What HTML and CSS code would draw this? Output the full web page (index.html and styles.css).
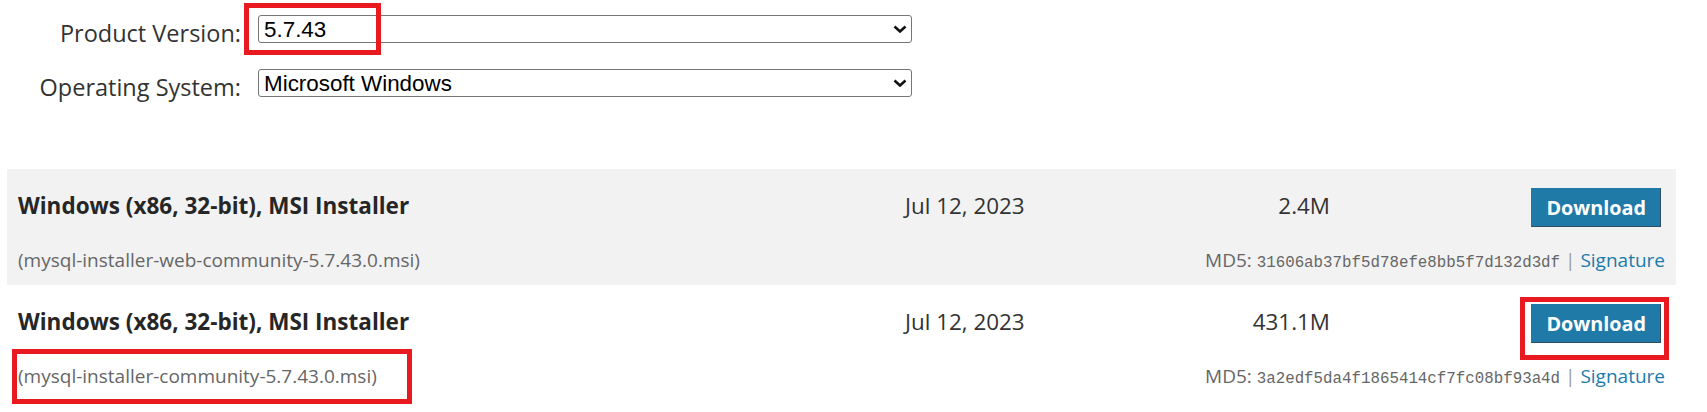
FILE: index.html
```html
<!DOCTYPE html>
<html lang="en">
<head>
    <meta charset="UTF-8">
    <meta name="viewport" content="width=device-width, initial-scale=1.0">
    <title>MySQL Installer Downloads</title>
    <link rel="stylesheet" href="styles.css">
</head>
<body>
    <div class="page">
        <div class="selectors">
            <label class="sel-label" for="version">Product Version:</label>
            <div class="sel-wrap">
                <select id="version" class="sel">
                    <option>5.7.43</option>
                </select>
                <svg class="chevron" viewBox="0 0 14 8"><path d="M1.5 1.5 L7 6.5 L12.5 1.5"/></svg>
            </div>
            <label class="sel-label" for="os">Operating System:</label>
            <div class="sel-wrap">
                <select id="os" class="sel">
                    <option>Microsoft Windows</option>
                </select>
                <svg class="chevron" viewBox="0 0 14 8"><path d="M1.5 1.5 L7 6.5 L12.5 1.5"/></svg>
            </div>
        </div>

        <div class="downloads">
            <div class="dl-row shaded">
                <div class="dl-name">Windows (x86, 32-bit), MSI Installer</div>
                <div class="dl-date">Jul 12, 2023</div>
                <div class="dl-size">2.4M</div>
                <div class="dl-action"><a class="btn" href="#">Download</a></div>
                <div class="dl-file">(mysql-installer-web-community-5.7.43.0.msi)</div>
                <div class="dl-md5">MD5: <code>31606ab37bf5d78efe8bb5f7d132d3df</code> <span class="sep">|</span> <a href="#">Signature</a></div>
            </div>
            <div class="dl-row">
                <div class="dl-name">Windows (x86, 32-bit), MSI Installer</div>
                <div class="dl-date">Jul 12, 2023</div>
                <div class="dl-size">431.1M</div>
                <div class="dl-action"><a class="btn" href="#">Download</a></div>
                <div class="dl-file">(mysql-installer-community-5.7.43.0.msi)</div>
                <div class="dl-md5">MD5: <code>3a2edf5da4f1865414cf7fc08bf93a4d</code> <span class="sep">|</span> <a href="#">Signature</a></div>
            </div>
        </div>

        <!-- red annotation boxes -->
        <span class="mark mark-version"></span>
        <span class="mark mark-button"></span>
        <span class="mark mark-file"></span>
    </div>
</body>
</html>
```

FILE: styles.css
```css
body {
    margin: 0;
    font-family: "Open Sans", "Liberation Sans", sans-serif;
    color: #333;
    background-color: #fff;
}
.page {
    position: relative;
    height: 412px;
    overflow: hidden;
}
.selectors {
    display: grid;
    grid-template-columns: 241px 654px;
    grid-auto-rows: 28px;
    column-gap: 17px;
    row-gap: 26px;
    padding-top: 15px;
}
.sel-label {
    align-self: start;
    margin-top: 4px;
    text-align: right;
    white-space: nowrap;
    font-size: 23.5px;
    line-height: 28px;
    color: #333;
}
.sel-wrap {
    position: relative;
}
.sel {
    display: block;
    width: 100%;
    height: 28px;
    box-sizing: border-box;
    padding: 0 30px 0 5px;
    font-family: "Liberation Sans", Arial, sans-serif;
    font-size: 22.4px;
    color: #000;
    background-color: #fff;
    border: 1px solid #767676;
    border-radius: 3px;
    appearance: none;
    -webkit-appearance: none;
}
.chevron {
    position: absolute;
    right: 5px;
    top: 10px;
    width: 14px;
    height: 8px;
    pointer-events: none;
    fill: none;
    stroke: #111;
    stroke-width: 2.6;
}
.downloads {
    margin: 72px 0 0 7px;
    width: 1669px;
}
.dl-row {
    display: grid;
    grid-template-columns: 887px 200px 225px 1fr;
    grid-template-rows: 39px 24px;
    row-gap: 21px;
    padding: 19px 15px 13px 11px;
}
.dl-row.shaded {
    background-color: #f2f2f2;
}
.dl-name {
    align-self: start;
    font-size: 22.5px;
    font-weight: 700;
    line-height: 35px;
    color: #262626;
}
.dl-date,
.dl-size {
    align-self: start;
    font-size: 22.4px;
    line-height: 35px;
    color: #333;
}
.dl-size {
    text-align: right;
}
.dl-action {
    display: flex;
    justify-content: flex-end;
}
.btn {
    display: block;
    height: 39px;
    box-sizing: border-box;
    padding: 0 14px;
    font-size: 19.8px;
    font-weight: 700;
    line-height: 37px;
    color: #fff;
    text-decoration: none;
    background-color: #1f7aa8;
    border: 1px solid #1f7aa8;
    border-right-color: #2f4d60;
    border-bottom-color: #2f4d60;
}
.dl-file {
    grid-column: 1 / 3;
    font-size: 19px;
    line-height: 24px;
    color: #666;
}
.dl-md5 {
    grid-column: 3 / 5;
    margin-right: -4px;
    text-align: right;
    white-space: nowrap;
    font-size: 19px;
    line-height: 24px;
    color: #666;
}
.dl-md5 code {
    font-family: "Liberation Mono", "DejaVu Sans Mono", monospace;
    font-size: 15.8px;
    line-height: 1;
    color: #666;
}
.dl-md5 .sep {
    color: #999;
}
.dl-md5 a {
    color: #1b7bab;
    text-decoration: none;
}
.mark {
    position: absolute;
    box-sizing: border-box;
    border: 5px solid #e8191f;
}
.mark-version {
    left: 244px;
    top: 3px;
    width: 137px;
    height: 52px;
}
.mark-button {
    left: 1520px;
    top: 297px;
    width: 149px;
    height: 63px;
}
.mark-file {
    left: 12px;
    top: 349px;
    width: 400px;
    height: 55px;
}
```
